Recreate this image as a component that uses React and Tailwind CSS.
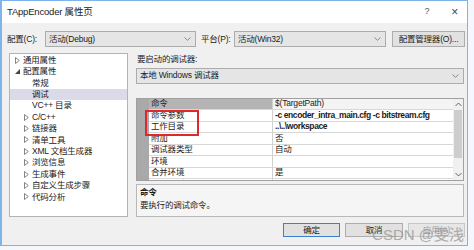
import React from 'react'

const Chevron = ({ className = '' }) => (
  <svg width="7" height="4" viewBox="0 0 7 4" className={className}>
    <path d="M0.5 0.5 L3.5 3.3 L6.5 0.5" fill="none" stroke="#8a8a8a" strokeWidth="1" />
  </svg>
)

const Closed = () => (
  <svg width="5" height="7" viewBox="0 0 5 7">
    <path d="M0.5 0.5 L4.3 3.5 L0.5 6.5 Z" fill="none" stroke="#777" strokeWidth="0.9" />
  </svg>
)

const Open = () => (
  <svg width="5" height="5" viewBox="0 0 5 5">
    <path d="M5 0 L5 5 L0 5 Z" fill="#444" />
  </svg>
)

function Select({ text, className = '' }) {
  return (
    <div className={`flex items-center h-[16px] bg-[#e5e5e5] border border-[#acacac] pl-[3px] pr-[4px] ${className}`}>
      <span className="flex-1 truncate">{text}</span>
      <Chevron />
    </div>
  )
}

const tree = [
  { label: '通用属性', arrow: 'closed', indent: 0 },
  { label: '配置属性', arrow: 'open', indent: 0 },
  { label: '常规', indent: 2 },
  { label: '调试', indent: 2, selected: true },
  { label: 'VC++ 目录', indent: 2 },
  { label: 'C/C++', arrow: 'closed', indent: 1 },
  { label: '链接器', arrow: 'closed', indent: 1 },
  { label: '清单工具', arrow: 'closed', indent: 1 },
  { label: 'XML 文档生成器', arrow: 'closed', indent: 1 },
  { label: '浏览信息', arrow: 'closed', indent: 1 },
  { label: '生成事件', arrow: 'closed', indent: 1 },
  { label: '自定义生成步骤', arrow: 'closed', indent: 1 },
  { label: '代码分析', arrow: 'closed', indent: 1 },
]

const props = [
  { name: '命令', value: '$(TargetPath)', selected: true },
  { name: '命令参数', value: '-c encoder_intra_main.cfg -c bitstream.cfg', bold: true },
  { name: '工作目录', value: '..\\..\\workspace', bold: true },
  { name: '附加', value: '否' },
  { name: '调试器类型', value: '自动' },
  { name: '环境', value: '' },
  { name: '合并环境', value: '是' },
  { name: 'SQL 调试', value: '否' },
]

export default function App() {
  return (
    <div className="w-[474px] h-[250px] bg-[#f4f8fc] overflow-hidden relative font-['Liberation_Sans','Noto_Sans_CJK_SC',sans-serif] text-[8.5px] tracking-[-0.2px] text-[#1b1b1b] whitespace-nowrap">
      <div className="w-[468px] h-[246px] flex flex-col border-l-2 border-r border-b border-t border-[#7eb4ea] bg-[#f0f0f0]">
        {/* title bar */}
        <div className="h-[22px] bg-white flex items-center pl-[5px] pr-[9px]">
          <span className="text-[9.5px] flex-1">TAppEncoder 属性页</span>
          <span className="text-[9px] text-[#555] mr-[22px]">?</span>
          <span className="text-[12px] text-[#444] leading-none">×</span>
        </div>

        {/* config row */}
        <div className="flex items-center h-[16px] mt-[8px] pl-[5px]">
          <span className="w-[38px]">配置(C):</span>
          <Select text="活动(Debug)" className="w-[151px]" />
          <span className="ml-[5px] w-[33px]">平台(P):</span>
          <Select text="活动(Win32)" className="w-[152px]" />
          <div className="ml-[6px] w-[73px] h-[16px] flex items-center justify-center bg-[#e1e1e1] border border-[#adadad]">配置管理器(O)...</div>
        </div>

        {/* main area */}
        <div className="flex mt-[6px] pl-[7px] h-[164px]">
          <div className="w-[119px] h-[164px] bg-white border border-[#b4b4b4] pt-[0.5px]">
            {tree.map((t) => (
              <div
                key={t.label}
                className={`h-[11.4px] flex items-center ${t.selected ? 'bg-[#dadae8]' : ''}`}
                style={{ paddingLeft: t.indent === 2 ? 22 : t.indent === 1 ? 14 : 5 }}
              >
                {t.arrow && (
                  <span className="w-[8px] flex items-center">{t.arrow === 'open' ? <Open /> : <Closed />}</span>
                )}
                <span>{t.label}</span>
              </div>
            ))}
          </div>

          <div className="ml-[8px] w-[328px] flex flex-col">
            <div className="h-[12px] leading-[12px] pl-[1px]">要启动的调试器:</div>
            <Select text="本地 Windows 调试器" className="mt-[3px] w-[328px] h-[14px]" />

            {/* property grid */}
            <div className="relative mt-[14px] h-[86px] border border-[#a0a0a0] bg-white flex overflow-hidden">
              <div className="w-[12px] bg-[#a9a9a9] shrink-0" />
              <div className="flex-1 flex flex-col">
                {props.map((p) => (
                  <div key={p.name} className="h-[11.5px] flex border-b border-[#d8d8d8] shrink-0">
                    <div className={`w-[124px] pl-[2px] flex items-center border-r border-[#d0d0d0] ${p.selected ? 'bg-[#b4b4b4]' : ''}`}>{p.name}</div>
                    <div className={`flex-1 pl-[2px] flex items-center ${p.bold ? 'font-bold tracking-[-0.4px]' : ''} ${p.selected ? 'bg-[#f4f4f4]' : ''}`}>{p.value}</div>
                  </div>
                ))}
              </div>
              <div className="w-[10px] shrink-0 bg-[#f0f0f0] flex flex-col items-center">
                <svg width="7" height="9" viewBox="0 0 7 9" className="mt-[1px]">
                  <path d="M0.5 6 L3.5 3 L6.5 6" fill="none" stroke="#666" strokeWidth="1" />
                </svg>
                <div className="w-[8px] h-[48px] bg-[#cdcdcd] mt-[1px]" />
                <div className="flex-1" />
                <svg width="7" height="9" viewBox="0 0 7 9" className="mb-[1px]">
                  <path d="M0.5 3 L3.5 6 L6.5 3" fill="none" stroke="#666" strokeWidth="1" />
                </svg>
              </div>
              <div className="absolute left-[8px] top-[11px] w-[54px] h-[26px] border-2 border-[#e0272b]" />
            </div>

            {/* description */}
            <div className="mt-[3px] h-[34px] border border-[#b8b8b8] bg-[#f5f5f5] pl-[3px] pt-[1px]">
              <div className="font-bold h-[13px] leading-[13px]">命令</div>
              <div className="h-[13px] leading-[13px]">要执行的调试命令。</div>
            </div>
          </div>
        </div>

        {/* buttons */}
        <div className="flex justify-end pr-[2px] mt-[6px] gap-[5px]">
          <div className="w-[57px] h-[14px] flex items-center justify-center bg-[#e1e1e1] border border-[#3c7fcf]">确定</div>
          <div className="w-[58px] h-[14px] flex items-center justify-center bg-[#e1e1e1] border border-[#adadad]">取消</div>
          <div className="w-[57px] h-[14px] flex items-center justify-center bg-[#e6e6e6] border border-[#c8c8c8] text-[#a0a0a0]">应用(A)</div>
        </div>
      </div>
      <div className="absolute right-[10px] bottom-[4px] text-[15px] tracking-normal text-[#9a9a9a] opacity-80">CSDN @雯浅</div>
    </div>
  )
}
